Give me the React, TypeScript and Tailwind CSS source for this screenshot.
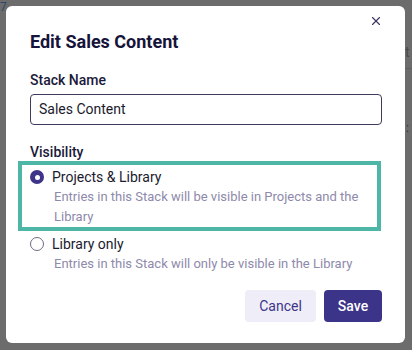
import { X } from "lucide-react";

const font = { fontFamily: "Roboto, 'Noto Sans', sans-serif" };

function Radio({ checked }: { checked: boolean }) {
    return checked ? (
        <span className="w-[14px] h-[14px] rounded-full bg-[#3d3589] flex items-center justify-center shrink-0">
            <span className="w-[5px] h-[5px] rounded-full bg-white" />
        </span>
    ) : (
        <span className="w-[14px] h-[14px] rounded-full border border-[#6f6c80] bg-white shrink-0" />
    );
}

function Option({ checked, title, desc }: { checked: boolean; title: string; desc: string }) {
    return (
        <>
            <div className="flex items-center gap-[8px] h-5">
                <Radio checked={checked} />
                <span className="text-[14px] text-[#1b1a2e]">{title}</span>
            </div>
            <p className="ml-[24px] text-[13px] leading-5 text-[#8e8aab]">{desc}</p>
        </>
    );
}

export default function App() {
    return (
        <div className="relative h-[350px] w-[412px] overflow-hidden bg-[#6c6c6c] p-[6px]" style={font}>
            {/* page behind the overlay */}
            <div className="absolute left-0 top-0 text-[12px] leading-[14px] text-[#2c4a6e]">7</div>
            <div className="absolute left-[405px] top-[42px] text-[14px] text-[#4a4a4a]">t</div>
            <div className="absolute left-[405px] top-[68px] w-[10px] h-px bg-[#5f5f5f]" />
            <div className="absolute left-[406px] top-[119px] text-[12px] text-[#333]">:</div>

            <div className="relative w-[399px] h-[337px] bg-white rounded-[6px] px-[24px] pt-[24px]">
                <button className="absolute right-[22px] top-[8px] text-[#3b3760]">
                    <X size={14} strokeWidth={2} />
                </button>
                <h2 className="text-[18px] leading-6 font-bold text-[#16143a]">Edit Sales Content</h2>

                <label className="block mt-4 text-[14px] leading-5 font-medium text-[#1b1a3a]">Stack Name</label>
                <div className="mt-1 w-[352px] h-[31px] border border-[#3e3a5c] rounded-[4px] flex items-center px-[8px] text-[14px] text-[#1b1a2e]">
                    Sales Content
                </div>

                <div className="mt-[18px] text-[14px] leading-[18px] font-medium text-[#1b1a3a]">Visibility</div>

                <div className="-ml-[12px] w-[363px] border-4 border-[#4db6a6] pl-[8px] pt-[2px]">
                    <Option
                        checked
                        title="Projects & Library"
                        desc="Entries in this Stack will be visible in Projects and the Library"
                    />
                </div>

                <div className="mt-[3px]">
                    <Option
                        checked={false}
                        title="Library only"
                        desc="Entries in this Stack will only be visible in the Library"
                    />
                </div>

                <div className="mt-4 w-[352px] flex justify-end gap-2">
                    <button className="h-8 w-[71px] rounded-[4px] bg-[#efedf8] text-[14px] text-[#3d3589]">Cancel</button>
                    <button className="h-8 w-[58px] rounded-[4px] bg-[#3c3489] text-[14px] font-medium text-white">Save</button>
                </div>
            </div>
        </div>
    );
}
